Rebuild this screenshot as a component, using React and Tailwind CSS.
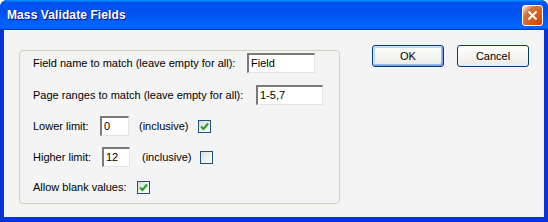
import React from 'react';

const font = { fontFamily: '"Liberation Sans", Arial, sans-serif' };

function TextBox({ value, className }) {
    return (
        <div
            className={`h-[20px] bg-white border-t-2 border-l-2 border-r border-b border-t-[#7a7a7a] border-l-[#7a7a7a] border-r-[#e4e4e4] border-b-[#e4e4e4] flex items-center pl-[2px] text-[11px] text-black ${className}`}
        >
            {value}
        </div>
    );
}

function CheckBox({ checked }) {
    return (
        <div className="w-[13px] h-[13px] border border-[#1c5180] bg-gradient-to-br from-[#dcdcd7] to-[#ffffff] flex items-center justify-center">
            {checked && (
                <svg width="9" height="9" viewBox="0 0 9 9">
                    <path d="M1 4.5 L3.5 7 L8 1.5" fill="none" stroke="#21a121" strokeWidth="2" />
                </svg>
            )}
        </div>
    );
}

export default function App() {
    return (
        <div
            className="w-[548px] h-[222px] flex flex-col rounded-t-[7px] bg-[#0831d9] overflow-hidden"
            style={font}
        >
            {/* Title bar */}
            <div className="h-[30px] flex items-center justify-between pl-[7px] pr-[5px] bg-[linear-gradient(to_bottom,#0997ff_0%,#0053ee_8%,#0050ee_40%,#0066ff_88%,#0066ff_93%,#005bff_95%,#003dd7_96%,#003dd7_100%)]">
                <span className="text-white text-[12px] font-bold tracking-[0.1px] [text-shadow:1px_1px_#0f1089]">
                    Mass Validate Fields
                </span>
                <div className="w-[21px] h-[21px] rounded-[3px] border border-white bg-[radial-gradient(circle_at_90%_90%,#cc4600_0%,#dc6527_55%,#cd7546_70%,#ffccb2_90%,#ffffff_100%)] flex items-center justify-center mt-[1px]">
                    <svg width="11" height="11" viewBox="0 0 11 11">
                        <path d="M1.5 1.5 L9.5 9.5 M9.5 1.5 L1.5 9.5" stroke="white" strokeWidth="2" />
                    </svg>
                </div>
            </div>

            {/* Body */}
            <div className="flex-1 mx-[4px] mb-[5px] bg-[#f4f4f4] flex pl-[15px] pt-[20px] text-[11px] text-black">
                <div className="w-[321px] h-[154px] border border-[#d0d0bf] rounded-[4px] pl-[13px] pt-[2px]">
                    <div className="h-[20px] flex items-center">
                        <span className="w-[214px]">Field name to match (leave empty for all):</span>
                        <TextBox value="Field" className="w-[68px]" />
                    </div>
                    <div className="h-[20px] flex items-center mt-[12px]">
                        <span className="w-[223px]">Page ranges to match (leave empty for all):</span>
                        <TextBox value="1-5,7" className="w-[67px]" />
                    </div>
                    <div className="h-[20px] flex items-center mt-[11px]">
                        <span className="w-[67px]">Lower limit:</span>
                        <TextBox value="0" className="w-[29px]" />
                        <span className="ml-[10px] w-[59px]">(inclusive)</span>
                        <CheckBox checked />
                    </div>
                    <div className="h-[20px] flex items-center mt-[11px]">
                        <span className="w-[69px]">Higher limit:</span>
                        <TextBox value="12" className="w-[28px]" />
                        <span className="ml-[12px] w-[58px]">(inclusive)</span>
                        <CheckBox />
                    </div>
                    <div className="h-[20px] flex items-center mt-[10px]">
                        <span className="w-[104px]">Allow blank values:</span>
                        <CheckBox checked />
                    </div>
                </div>

                <div className="flex gap-[13px] ml-[32px] mt-[-5px] h-[22px]">
                    <button className="w-[72px] h-[22px] rounded-[3px] border border-[#003c74] bg-gradient-to-b from-[#ffffff] to-[#ecebe6] shadow-[inset_-1px_-1px_#7ba2e7,inset_1px_1px_#cee7ff,inset_-2px_-2px_#98b8ea,inset_2px_2px_#bcd4f6] text-[11px]">
                        OK
                    </button>
                    <button className="w-[72px] h-[22px] rounded-[3px] border border-[#003c74] bg-gradient-to-b from-[#ffffff] to-[#ecebe6] text-[11px]">
                        Cancel
                    </button>
                </div>
            </div>
        </div>
    );
}
